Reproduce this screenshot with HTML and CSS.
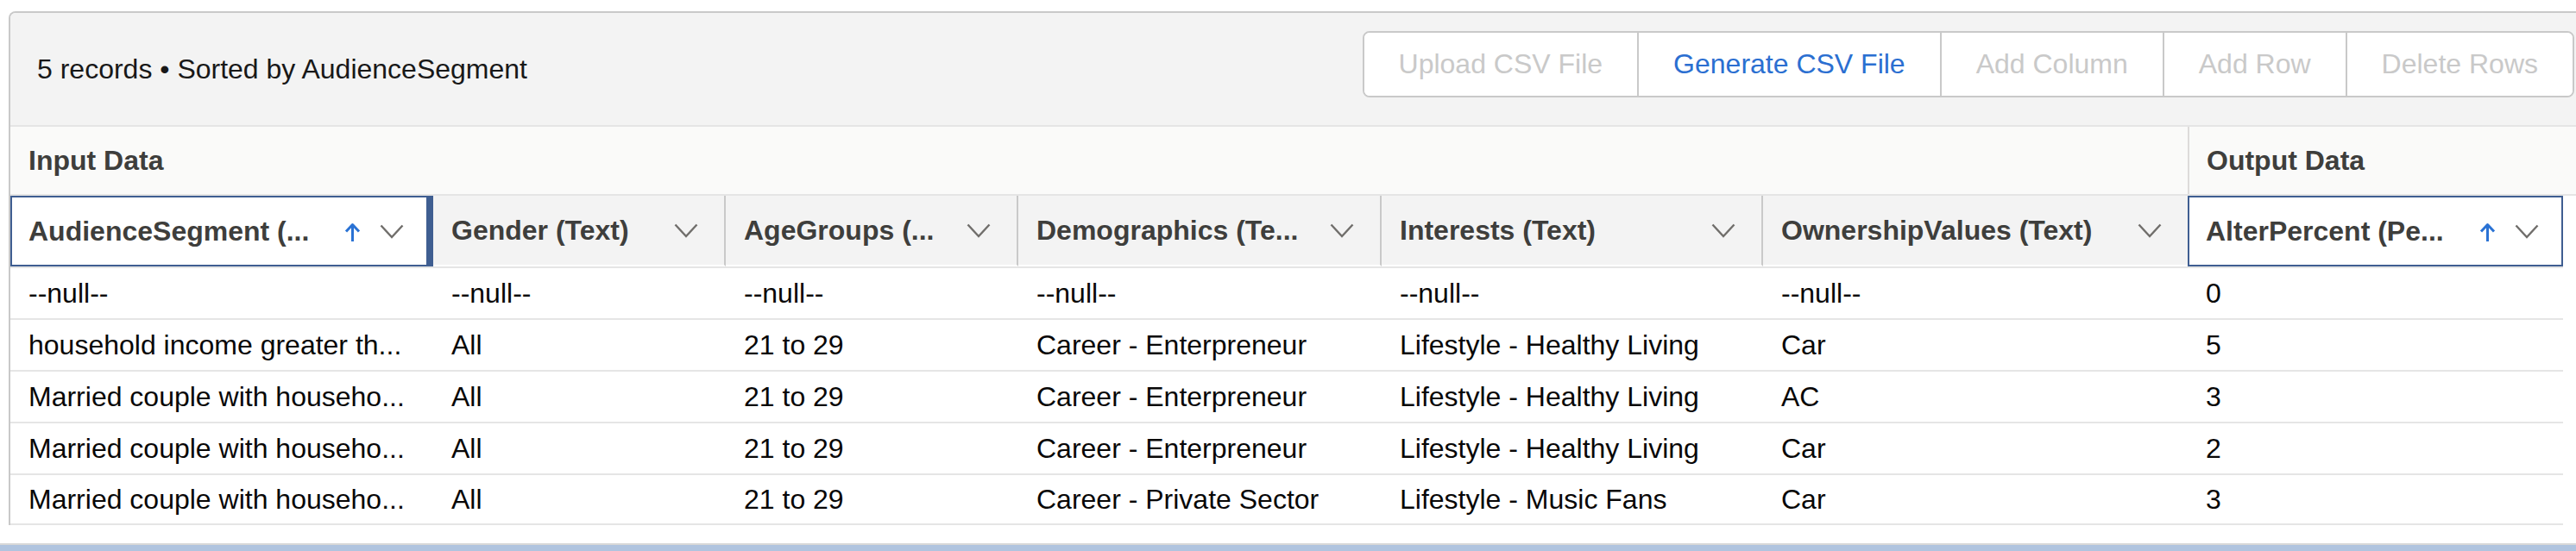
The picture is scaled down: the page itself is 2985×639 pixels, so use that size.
FILE: index.html
```html
<!DOCTYPE html>
<html lang="en">
<head>
  <meta charset="UTF-8" />
  <title>Audience Segments</title>
  <link rel="stylesheet" href="styles.css">
</head>
<body>

  <div class="page">
    <div class="card">

      <div class="toolbar">
        <div class="summary">5 records &bull; Sorted by AudienceSegment</div>
        <div class="btn-group">
          <button class="btn" disabled>Upload CSV File</button>
          <button class="btn btn-active">Generate CSV File</button>
          <button class="btn" disabled>Add Column</button>
          <button class="btn" disabled>Add Row</button>
          <button class="btn" disabled>Delete Rows</button>
        </div>
      </div>

      <div class="groups">
        <div class="group group-in">Input Data</div>
        <div class="group group-out">Output Data</div>
      </div>

      <table class="grid">
        <colgroup>
          <col style="width:490px">
          <col style="width:339px">
          <col style="width:339px">
          <col style="width:421px">
          <col style="width:442px">
          <col style="width:492px">
          <col style="width:435px">
        </colgroup>
        <thead>
          <tr>
            <th class="focus first">
              <div class="hd">
                <span class="hd-label">AudienceSegment (...</span>
                <svg class="sort" width="19" height="23" viewBox="0 0 19 23"><path d="M9.5 22V3M2 10.5L9.5 2.5 17 10.5" fill="none" stroke="#2a72d4" stroke-width="3" stroke-linejoin="round"/></svg>
                <svg class="chev" width="28" height="17" viewBox="0 0 28 17"><polyline points="1.5,1.5 14,15 26.5,1.5" fill="none" stroke="#706e6b" stroke-width="2.4"/></svg>
              </div>
            </th>
            <th class="after-focus">
              <div class="hd">
                <span class="hd-label">Gender (Text)</span>
                <svg class="chev" width="28" height="17" viewBox="0 0 28 17"><polyline points="1.5,1.5 14,15 26.5,1.5" fill="none" stroke="#706e6b" stroke-width="2.4"/></svg>
              </div>
            </th>
            <th>
              <div class="hd">
                <span class="hd-label">AgeGroups (...</span>
                <svg class="chev" width="28" height="17" viewBox="0 0 28 17"><polyline points="1.5,1.5 14,15 26.5,1.5" fill="none" stroke="#706e6b" stroke-width="2.4"/></svg>
              </div>
            </th>
            <th>
              <div class="hd">
                <span class="hd-label">Demographics (Te...</span>
                <svg class="chev" width="28" height="17" viewBox="0 0 28 17"><polyline points="1.5,1.5 14,15 26.5,1.5" fill="none" stroke="#706e6b" stroke-width="2.4"/></svg>
              </div>
            </th>
            <th>
              <div class="hd">
                <span class="hd-label">Interests (Text)</span>
                <svg class="chev" width="28" height="17" viewBox="0 0 28 17"><polyline points="1.5,1.5 14,15 26.5,1.5" fill="none" stroke="#706e6b" stroke-width="2.4"/></svg>
              </div>
            </th>
            <th class="before-focus">
              <div class="hd">
                <span class="hd-label">OwnershipValues (Text)</span>
                <svg class="chev" width="28" height="17" viewBox="0 0 28 17"><polyline points="1.5,1.5 14,15 26.5,1.5" fill="none" stroke="#706e6b" stroke-width="2.4"/></svg>
              </div>
            </th>
            <th class="focus">
              <div class="hd">
                <span class="hd-label">AlterPercent (Pe...</span>
                <svg class="sort" width="19" height="23" viewBox="0 0 19 23"><path d="M9.5 22V3M2 10.5L9.5 2.5 17 10.5" fill="none" stroke="#2a72d4" stroke-width="3" stroke-linejoin="round"/></svg>
                <svg class="chev" width="28" height="17" viewBox="0 0 28 17"><polyline points="1.5,1.5 14,15 26.5,1.5" fill="none" stroke="#706e6b" stroke-width="2.4"/></svg>
              </div>
            </th>
          </tr>
        </thead>
        <tbody>
          <tr>
            <td>--null--</td><td>--null--</td><td>--null--</td><td>--null--</td><td>--null--</td><td>--null--</td><td>0</td>
          </tr>
          <tr>
            <td>household income greater th...</td><td>All</td><td>21 to 29</td><td>Career - Enterpreneur</td><td>Lifestyle - Healthy Living</td><td>Car</td><td>5</td>
          </tr>
          <tr>
            <td>Married couple with househo...</td><td>All</td><td>21 to 29</td><td>Career - Enterpreneur</td><td>Lifestyle - Healthy Living</td><td>AC</td><td>3</td>
          </tr>
          <tr>
            <td>Married couple with househo...</td><td>All</td><td>21 to 29</td><td>Career - Enterpreneur</td><td>Lifestyle - Healthy Living</td><td>Car</td><td>2</td>
          </tr>
          <tr>
            <td>Married couple with househo...</td><td>All</td><td>21 to 29</td><td>Career - Private Sector</td><td>Lifestyle - Music Fans</td><td>Car</td><td>3</td>
          </tr>
        </tbody>
      </table>

    </div>
    <div class="strip"></div>
  </div>

</body>
</html>
```

FILE: styles.css
```css
* { box-sizing: border-box; }
html, body {
  margin: 0; padding: 0;
  height: 100vh;
  overflow: hidden;
  background: #fff;
  font-family: "Liberation Sans", Arial, sans-serif;
}
.page {
  height: 639px;
  display: flex;
  flex-direction: column;
}
.card {
  flex: none;
  margin: 13px 0 0 10px;
  width: 3006px;
  border: 2px solid #c9c9c9;
  border-bottom: none;
  border-radius: 8px 8px 0 0;
  background: #fff;
  overflow: hidden;
}

/* toolbar */
.toolbar {
  height: 132px;
  padding: 0 31px;
  display: flex;
  align-items: center;
  justify-content: space-between;
  background: #f3f3f3;
  border-bottom: 2px solid #e5e5e5;
}
.summary {
  font-size: 32px;
  color: #181818;
}
.btn-group {
  display: flex;
  margin-bottom: 11px;
  border: 2px solid #c9c9c9;
  border-radius: 8px;
  background: #fff;
  overflow: hidden;
}
.btn {
  height: 73px;
  padding: 0 40px;
  border: none;
  border-left: 2px solid #c9c9c9;
  background: #fff;
  font-family: inherit;
  font-size: 32px;
  color: #c9c9c9;
  white-space: nowrap;
}
.btn:first-child { border-left: none; }
.btn-active {
  color: #2b6fd1;
  cursor: pointer;
}

/* column groups */
.groups {
  display: flex;
  height: 80px;
  background: #fafaf9;
  border-bottom: 2px solid #e5e5e5;
}
.group {
  display: flex;
  align-items: center;
  padding-left: 21px;
  font-size: 32px;
  font-weight: bold;
  color: #3e3e3c;
}
.group-in { width: 2523px; }
.group-out {
  flex: 1;
  padding-left: 20px;
  border-left: 2px solid #dddbda;
}

/* grid */
.grid {
  border-collapse: separate;
  border-spacing: 0;
  table-layout: fixed;
  width: 2958px;
}
.grid thead tr { height: 82px; }
.grid tbody tr { height: 60px; }
.grid th {
  padding: 0 30px 0 21px;
  background: #f3f3f3;
  border-right: 2px solid #c9c9c9;
  border-bottom: 2px solid #fff;
  text-align: left;
  font-size: 32px;
  font-weight: bold;
  color: #3e3e3c;
  white-space: nowrap;
}
.grid th.before-focus { border-right: none; }
.grid th.focus {
  padding: 0 26px 0 19px;
  background: #fff;
  border: 2px solid #3f5e91;
}
.grid th.first { border-right-width: 8px; }
.hd {
  display: flex;
  align-items: center;
}
.hd-label {
  flex: 1;
  overflow: hidden;
}
.sort {
  flex: none;
  margin: 3px 22px 0 0;
}
.chev { flex: none; }
.grid td {
  padding: 0 21px;
  border-top: 2px solid #e5e5e5;
  font-size: 32px;
  color: #080707;
  white-space: nowrap;
  overflow: hidden;
}
.grid tbody tr:last-child td { border-bottom: 2px solid #e5e5e5; }

.strip {
  flex: 1;
  margin-top: 21px;
  border-top: 2px solid #d8d8d8;
  background: #b0c4df;
}
```
